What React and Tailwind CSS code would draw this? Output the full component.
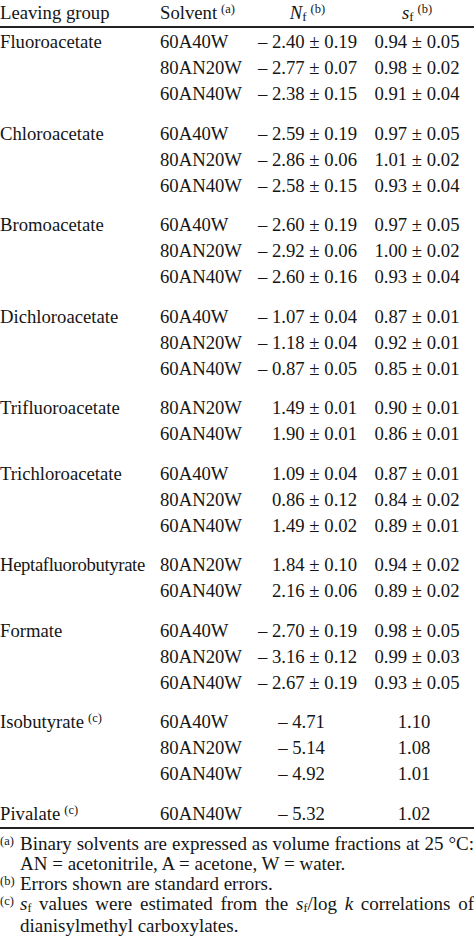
import React from 'react';

const groups = [
  {
    name: 'Fluoroacetate',
    rows: [
      ['60A40W', '\u2013 2.40 \u00b1 0.19', '0.94 \u00b1 0.05'],
      ['80AN20W', '\u2013 2.77 \u00b1 0.07', '0.98 \u00b1 0.02'],
      ['60AN40W', '\u2013 2.38 \u00b1 0.15', '0.91 \u00b1 0.04'],
    ],
  },
  {
    name: 'Chloroacetate',
    rows: [
      ['60A40W', '\u2013 2.59 \u00b1 0.19', '0.97 \u00b1 0.05'],
      ['80AN20W', '\u2013 2.86 \u00b1 0.06', '1.01 \u00b1 0.02'],
      ['60AN40W', '\u2013 2.58 \u00b1 0.15', '0.93 \u00b1 0.04'],
    ],
  },
  {
    name: 'Bromoacetate',
    rows: [
      ['60A40W', '\u2013 2.60 \u00b1 0.19', '0.97 \u00b1 0.05'],
      ['80AN20W', '\u2013 2.92 \u00b1 0.06', '1.00 \u00b1 0.02'],
      ['60AN40W', '\u2013 2.60 \u00b1 0.16', '0.93 \u00b1 0.04'],
    ],
  },
  {
    name: 'Dichloroacetate',
    rows: [
      ['60A40W', '\u2013 1.07 \u00b1 0.04', '0.87 \u00b1 0.01'],
      ['80AN20W', '\u2013 1.18 \u00b1 0.04', '0.92 \u00b1 0.01'],
      ['60AN40W', '\u2013 0.87 \u00b1 0.05', '0.85 \u00b1 0.01'],
    ],
  },
  {
    name: 'Trifluoroacetate',
    rows: [
      ['80AN20W', '1.49 \u00b1 0.01', '0.90 \u00b1 0.01'],
      ['60AN40W', '1.90 \u00b1 0.01', '0.86 \u00b1 0.01'],
    ],
  },
  {
    name: 'Trichloroacetate',
    rows: [
      ['60A40W', '1.09 \u00b1 0.04', '0.87 \u00b1 0.01'],
      ['80AN20W', '0.86 \u00b1 0.12', '0.84 \u00b1 0.02'],
      ['60AN40W', '1.49 \u00b1 0.02', '0.89 \u00b1 0.01'],
    ],
  },
  {
    name: 'Heptafluorobutyrate',
    tight: true,
    rows: [
      ['80AN20W', '1.84 \u00b1 0.10', '0.94 \u00b1 0.02'],
      ['60AN40W', '2.16 \u00b1 0.06', '0.89 \u00b1 0.02'],
    ],
  },
  {
    name: 'Formate',
    rows: [
      ['60A40W', '\u2013 2.70 \u00b1 0.19', '0.98 \u00b1 0.05'],
      ['80AN20W', '\u2013 3.16 \u00b1 0.12', '0.99 \u00b1 0.03'],
      ['60AN40W', '\u2013 2.67 \u00b1 0.19', '0.93 \u00b1 0.05'],
    ],
  },
  {
    name: 'Isobutyrate',
    note: 'c',
    single: true,
    rows: [
      ['60A40W', '\u2013 4.71', '1.10'],
      ['80AN20W', '\u2013 5.14', '1.08'],
      ['60AN40W', '\u2013 4.92', '1.01'],
    ],
  },
  {
    name: 'Pivalate',
    note: 'c',
    single: true,
    rows: [['60AN40W', '\u2013 5.32', '1.02']],
  },
];

const Sup = ({ children }) => (
  <span className="not-italic text-[12.5px] relative -top-[6px] ml-[4px]">({children})</span>
);

const Sub = ({ children }) => (
  <span className="not-italic text-[13px] relative top-[2px]">{children}</span>
);

const Note = ({ label, children }) => (
  <div className="flex">
    <div className="w-[20px] shrink-0 text-[12.5px] leading-[14px]">({label})</div>
    <p className="flex-1 text-justify">{children}</p>
  </div>
);

export default function App() {
  return (
    <div
      className="w-[474px] bg-white text-[#151515]"
      style={{ fontFamily: '"Liberation Serif", "Times New Roman", serif' }}
    >
      {/* header */}
      <div className="grid grid-cols-[160px_95px_105px_1fr] h-[28px] border-b-2 border-[#222] text-[18.7px] leading-[26px]">
        <div>Leaving group</div>
        <div>
          Solvent<Sup>a</Sup>
        </div>
        <div className="text-center">
          <span className="italic">N</span>
          <Sub>f</Sub>
          <Sup>b</Sup>
        </div>
        <div className="text-center">
          <span className="italic">s</span>
          <Sub>f</Sub>
          <Sup>b</Sup>
        </div>
      </div>

      {/* body */}
      <div className="border-b-2 border-[#222] text-[18.7px] leading-[26px]">
        {groups.map((g, gi) => (
          <div key={g.name} className={gi === 0 ? 'pt-px' : 'pt-[13.5px]'}>
            {g.rows.map((r, ri) => (
              <div key={ri} className="grid grid-cols-[160px_95px_105px_1fr] h-[26px]">
                <div className={g.tight ? 'whitespace-nowrap tracking-[-0.35px]' : 'whitespace-nowrap'}>
                  {ri === 0 && g.name}
                  {ri === 0 && g.note && <Sup>{g.note}</Sup>}
                </div>
                <div>{r[0]}</div>
                <div className={g.single ? 'text-center pr-[12px]' : 'text-right pr-[3px]'}>{r[1]}</div>
                <div className={g.single ? 'text-center pr-[6px]' : 'text-center'}>{r[2]}</div>
              </div>
            ))}
          </div>
        ))}
      </div>

      {/* footnotes */}
      <div className="pt-[5px] text-[19px] leading-[20px]">
        <Note label="a">
          Binary solvents are expressed as volume fractions at 25 °C: AN = acetonitrile, A = acetone, W = water.
        </Note>
        <Note label="b">Errors shown are standard errors.</Note>
        <Note label="c">
          <span className="italic">s</span>
          <span className="text-[12px] relative top-[2px]">f</span> values were estimated from the{' '}
          <span className="italic">s</span>
          <span className="text-[12px] relative top-[2px]">f</span>/log <span className="italic">k</span> correlations
          of dianisylmethyl carboxylates.
        </Note>
      </div>
    </div>
  );
}
